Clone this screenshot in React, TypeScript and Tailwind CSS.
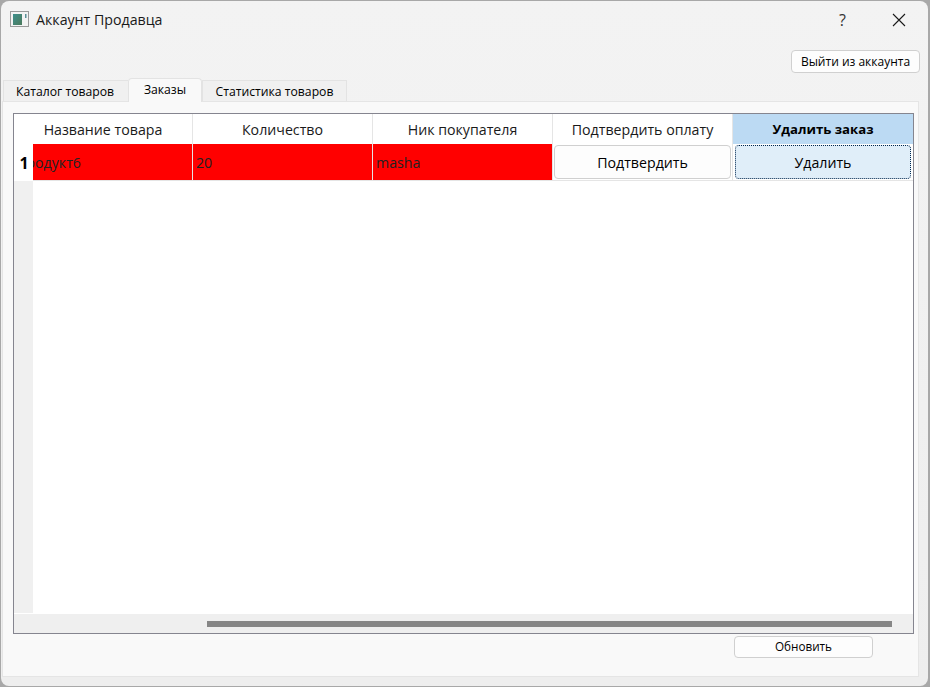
const font = { fontFamily: '"Open Sans", "Noto Sans", sans-serif' };

const columns = ["Название товара", "Количество", "Ник покупателя", "Подтвердить оплату"];

function WindowIcon() {
  return (
    <svg width="20" height="18" viewBox="0 0 20 18" className="block">
      <defs>
        <linearGradient id="pane" x1="0" y1="0" x2="1" y2="1">
          <stop offset="0" stopColor="#3d8f8c" />
          <stop offset="1" stopColor="#4c7a5c" />
        </linearGradient>
      </defs>
      <rect x="0.5" y="0.5" width="18" height="15" fill="#f3f3f3" stroke="#9a9a9a" />
      <rect x="3" y="3" width="9" height="11" fill="url(#pane)" />
      <rect x="15" y="3" width="1.5" height="4" fill="#5b8f98" />
    </svg>
  );
}

function CloseIcon() {
  return (
    <svg width="14" height="14" viewBox="0 0 14 14" className="block">
      <path d="M1 1 L13 13 M13 1 L1 13" stroke="#1a1a1a" strokeWidth="1.1" fill="none" />
    </svg>
  );
}

export default function App() {
  return (
    <div className="h-[687px] w-[930px] overflow-hidden bg-[#a8a8a8] pt-px pr-[2px] pb-px pl-px" style={font}>
      <div className="flex h-full w-full flex-col overflow-hidden rounded-lg bg-gradient-to-b from-[#f3f3f3] to-[#eeeeee] text-black">
        {/* title bar */}
        <div className="flex h-[37px] shrink-0 items-center pl-[9px]">
          <WindowIcon />
          <span className="ml-[6px] pt-[2px] text-[14.2px] leading-none text-[#1a1a1a]">Аккаунт Продавца</span>
          <span className="ml-auto text-[16px] leading-none text-[#333]">?</span>
          <div className="mr-[22px] ml-[46px]">
            <CloseIcon />
          </div>
        </div>

        {/* logout */}
        <div className="flex h-[40px] shrink-0 items-start justify-end pt-[12px] pr-[8px]">
          <button className="flex h-[23px] w-[129px] items-center justify-center rounded border border-[#d0d0d0] bg-[#fdfdfd] text-[12px] text-black">
            Выйти из аккаунта
          </button>
        </div>

        {/* tabs */}
        <div className="relative z-10 flex h-[23px] shrink-0 items-end pl-[2px]">
          <div className="flex h-[21px] w-[125px] items-center justify-center border-t border-l border-[#e3e3e3] bg-[#f0f0f0] pt-[2px] pr-[2px] text-[12.2px]">
            Каталог товаров
          </div>
          <div className="mb-[-1px] flex h-[24px] w-[74px] items-center justify-center rounded-t border-x border-t border-[#e3e3e3] bg-[#f9f9f9] text-[12.2px]">
            Заказы
          </div>
          <div className="flex h-[21px] w-[145px] items-center justify-center border-x border-t border-[#e3e3e3] bg-[#f0f0f0] pt-[2px] text-[12.2px]">
            Статистика товаров
          </div>
        </div>

        {/* tab pane */}
        <div className="ml-px flex h-[576px] w-[917px] shrink-0 flex-col border border-[#e5e5e5] bg-[#f9f9f9] pt-[11px] pl-[10px]">
          <div className="flex h-[521px] w-[901px] shrink-0 flex-col border border-[#85858f] bg-white">
            <div className="flex min-h-0 flex-1">
              {/* row header */}
              <div className="flex w-[19px] shrink-0 flex-col">
                <div className="h-[30px] bg-white" />
                <div className="flex h-[36px] items-center justify-center bg-white pt-px pl-px text-[16px] font-bold">1</div>
                <div className="mt-px flex-1 bg-[#f0f0f0]" />
              </div>

              <div className="flex-1">
                <div className="grid h-[30px] grid-cols-[160px_180px_180px_180px_180px] text-[14.2px]">
                  {columns.map((title, i) => (
                    <div
                      key={title}
                      className={
                        i === 0
                          ? "flex items-center justify-center border-r border-[#e5e5e5] pt-[2px] pr-[19px] text-[#1a1a1a]"
                          : "flex items-center justify-center border-r border-[#e5e5e5] pt-[2px] text-[#1a1a1a]"
                      }
                    >
                      {title}
                    </div>
                  ))}
                  <div className="flex items-center justify-center bg-[#bcdaf3] pt-px text-[13.2px] font-bold">Удалить заказ</div>
                </div>

                <div className="grid h-[37px] grid-cols-[160px_180px_180px_180px_180px] border-b border-[#e5e5e5] text-[14.2px]">
                  <div className="flex items-center overflow-hidden border-r border-[#e5e5e5] bg-[#ff0000] pt-[2px] text-[#222]">
                    <span className="ml-[-17px] whitespace-nowrap">Продукт6</span>
                  </div>
                  <div className="flex items-center border-r border-[#e5e5e5] bg-[#ff0000] pt-[2px] pl-[3px] text-[#222]">20</div>
                  <div className="flex items-center border-r border-[#e5e5e5] bg-[#ff0000] pt-[2px] pl-[3px] text-[#222]">masha</div>
                  <div className="flex items-center justify-center border-r border-[#e5e5e5] px-[1px]">
                    <button className="flex h-[34px] w-full items-center justify-center rounded border border-[#d0d0d0] bg-[#fdfdfd] pt-[2px]">
                      Подтвердить
                    </button>
                  </div>
                  <div className="flex items-center justify-center px-[2px]">
                    <button className="flex h-[34px] w-full items-center justify-center rounded border border-dotted border-[#00264d] bg-[#e0eef9] pt-[2px]">
                      Удалить
                    </button>
                  </div>
                </div>
              </div>
            </div>

            {/* horizontal scrollbar */}
            <div className="mt-px h-[19px] shrink-0 bg-[#efefef] pt-[7px] pr-[21px] pl-[193px]">
              <div className="h-[6px] bg-[#868686]" />
            </div>
          </div>

          <div className="flex justify-end pt-[2px] pr-[45px]">
            <button className="flex h-[22px] w-[139px] items-center justify-center rounded border border-[#d0d0d0] bg-[#fdfdfd] text-[11.7px]">
              Обновить
            </button>
          </div>
        </div>
      </div>
    </div>
  );
}
